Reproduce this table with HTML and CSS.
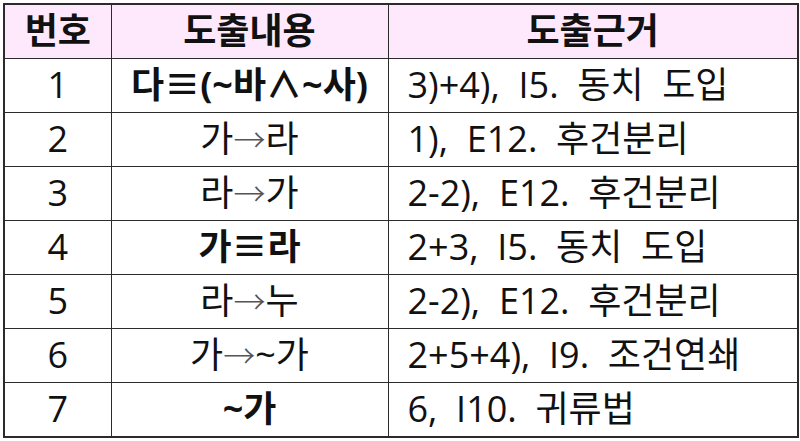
FILE: index.html
```html
<!DOCTYPE html>
<html lang="ko">
<head>
<meta charset="utf-8">
<link rel="stylesheet" href="styles.css">
</head>
<body>
<table class="proof">
  <colgroup>
    <col class="c-num">
    <col class="c-res">
    <col class="c-why">
  </colgroup>
  <thead>
    <tr>
      <th>번호</th>
      <th>도출내용</th>
      <th>도출근거</th>
    </tr>
  </thead>
  <tbody>
    <tr><td class="num">1</td><td class="res bold">다≡(~바∧~사)</td><td class="why">3)+4),&nbsp; I5.&nbsp; 동치&nbsp; 도입</td></tr>
    <tr><td class="num">2</td><td class="res">가<span class="arr">→</span>라</td><td class="why">1),&nbsp; E12.&nbsp; 후건분리</td></tr>
    <tr><td class="num">3</td><td class="res">라<span class="arr">→</span>가</td><td class="why">2-2),&nbsp; E12.&nbsp; 후건분리</td></tr>
    <tr><td class="num">4</td><td class="res bold">가≡라</td><td class="why">2+3,&nbsp; I5.&nbsp; 동치&nbsp; 도입</td></tr>
    <tr><td class="num">5</td><td class="res">라<span class="arr">→</span>누</td><td class="why">2-2),&nbsp; E12.&nbsp; 후건분리</td></tr>
    <tr><td class="num">6</td><td class="res">가<span class="arr">→</span>~가</td><td class="why">2+5+4),&nbsp; I9.&nbsp; 조건연쇄</td></tr>
    <tr><td class="num">7</td><td class="res bold">~가</td><td class="why">6,&nbsp; I10.&nbsp; 귀류법</td></tr>
  </tbody>
</table>
</body>
</html>
```

FILE: styles.css
```css
html, body {
  margin: 0;
  padding: 0;
  background: #ffffff;
}
body {
  padding: 3px;
  font-family: "Open Sans", "Noto Sans CJK KR", sans-serif;
  color: #111;
}
.proof {
  border-collapse: collapse;
  width: 794px;
  table-layout: fixed;
  border: 2px solid #2b2b2b;
}
.c-num { width: 107px; }
.c-res { width: 277px; }
.c-why { width: 410px; }
.proof th,
.proof td {
  border: 1.5px solid #2b2b2b;
  height: 51px;
  padding: 0 0 2px 0;
  font-size: 36px;
  line-height: 1;
  vertical-align: middle;
}
.proof th {
  background: #fde9fb;
  font-weight: 700;
  text-align: center;
}
.num, .res {
  text-align: center;
  font-weight: 400;
}
.res.bold { font-weight: 700; }
.why {
  text-align: left;
  padding-left: 19px !important;
  white-space: nowrap;
}
.arr {
  font-family: "Noto Sans CJK KR", sans-serif;
  font-weight: 300;
  font-size: 32px;
  color: #555;
}
```
